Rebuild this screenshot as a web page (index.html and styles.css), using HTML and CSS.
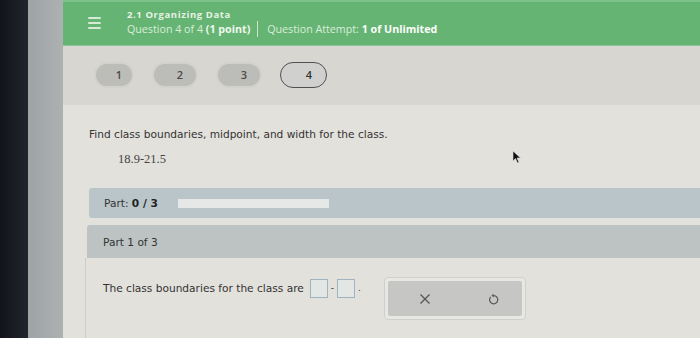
FILE: index.html
```html
<!DOCTYPE html>
<html>
<head>
<meta charset="utf-8">
<link rel="stylesheet" href="styles.css">
</head>
<body>
<div class="screen">
  <div class="bezel"></div>
  <div class="strip"></div>
  <div class="app">
    <header class="topbar">
      <div class="menu">
        <span></span><span></span><span></span>
      </div>
      <div class="titles">
        <div class="topic">2.1 Organizing Data</div>
        <div class="meta">Question 4 of 4 <b>(1 point)</b><span class="sep"></span>Question Attempt: <b class="hi">1 of Unlimited</b></div>
      </div>
    </header>
    <nav class="qnav">
      <div class="qbtn b1">1</div>
      <div class="qbtn">2</div>
      <div class="qbtn">3</div>
      <div class="qbtn cur">4</div>
    </nav>
    <main class="main">
      <p class="prompt">Find class boundaries, midpoint, and width for the class.</p>
      <p class="cls">18.9-21.5</p>
      <div class="partbar">
        <span>Part: <b>0 / 3</b></span>
        <div class="progress"></div>
      </div>
      <div class="parthead">Part 1 of 3</div>
      <div class="answer">
        <div class="sentence">The class boundaries for the class are <span class="box"></span><span class="dash">-</span><span class="box"></span><span class="dot">.</span></div>
        <div class="tools">
          <div class="toolsin">
            <svg class="xic" width="12" height="12" viewBox="0 0 12 12"><path d="M1.5 1.5 L10.5 10.5 M10.5 1.5 L1.5 10.5" stroke="#555" stroke-width="1.3" fill="none"/></svg>
            <svg class="undo" width="13" height="13" viewBox="0 0 14 14"><path d="M4 4.2 A4.4 4.4 0 1 0 7.2 2.8" stroke="#555" stroke-width="1.3" fill="none"/><path d="M7.2 0.8 L7.2 4.8 L4.8 2.8 Z" fill="#555"/></svg>
          </div>
        </div>
      </div>
    </main>
  </div>
  <svg class="cursor" width="10" height="14" viewBox="0 0 10 14"><path d="M1 1 L1 11 L3.5 8.6 L5.5 13 L7 12.3 L5 8 L8.5 8 Z" fill="#111" stroke="#ddd" stroke-width="0.6"/></svg>
</div>
</body>
</html>
```
FILE: styles.css
```css
* { box-sizing: border-box; }
html, body { margin: 0; padding: 0; }
body {
  width: 700px;
  height: 338px;
  overflow: hidden;
  background: #1b1e26;
  font-family: "DejaVu Sans", "Open Sans", sans-serif;
}
.screen {
  position: relative;
  display: flex;
  width: 700px;
  height: 338px;
}
.bezel {
  width: 28px;
  background: linear-gradient(90deg, #121419, #22252d);
}
.strip {
  width: 35px;
  background: linear-gradient(90deg, #9ea3a6, #adb1b2);
}
.app {
  flex: 1;
  display: flex;
  flex-direction: column;
  background: #e3e1dc;
}
.topbar {
  height: 46px;
  background: #66b474;
  border-top: 2px solid #7cc289;
  border-bottom: 1px solid #8dc798;
  display: flex;
  align-items: center;
  padding-left: 25px;
  color: #e4f1e2;
  font-family: "Open Sans", sans-serif;
}
.menu {
  width: 13px;
  display: flex;
  flex-direction: column;
  gap: 3px;
  margin-right: 26px;
  margin-top: -2px;
}
.menu span {
  display: block;
  height: 2px;
  background: #d6ebd5;
  border-radius: 1px;
}
.titles { margin-top: -2px; }
.topic {
  font-size: 9.5px;
  font-weight: 700;
  letter-spacing: 0.6px;
  line-height: 13px;
  color: #e6f2e4;
}
.meta {
  font-size: 10.7px;
  line-height: 15px;
  color: #d9eed8;
  display: flex;
  align-items: center;
  white-space: pre;
}
.meta b { font-weight: 700; color: #eef7ec; }
.meta b.hi { color: #fbfdfa; }
.sep {
  display: inline-block;
  width: 1px;
  height: 16px;
  background: #c9e6c9;
  margin: 0 9px 0 7px;
}
.qnav {
  height: 59px;
  background: #d8d6d1;
  display: flex;
  align-items: center;
  padding-left: 31px;
  gap: 18px;
  padding-bottom: 2px;
  font-family: "Open Sans", sans-serif;
}
.qbtn {
  width: 46px;
  height: 26px;
  border-radius: 13px;
  background: #bcbcb8;
  border: 2px solid #d3d1cc;
  font-size: 11px;
  color: #4a4a4a;
  display: flex;
  align-items: center;
  justify-content: flex-end;
  padding-right: 13px;
  font-weight: 600;
}
.qbtn.b1 { width: 40px; padding-right: 10px; }
.qbtn.cur {
  width: 47px;
  background: #d0d1cf;
  border: 1.5px solid #4f5050;
  padding-right: 14px;
  color: #333;
}
.main {
  flex: 1;
  display: flex;
  flex-direction: column;
  padding-left: 26px;
}
.prompt {
  margin: 22px 0 0 0;
  font-size: 10.6px;
  line-height: 14px;
  color: #333;
}
.cls {
  margin: 11px 0 0 29px;
  font-family: "Liberation Serif", serif;
  font-size: 12.5px;
  line-height: 14px;
  color: #444;
}
.partbar {
  margin-top: 22px;
  height: 30px;
  background: #b9c5c9;
  border-radius: 3px 0 0 3px;
  display: flex;
  align-items: center;
  padding-left: 15px;
  font-size: 10.6px;
  color: #333;
  gap: 20px;
}
.partbar b { font-weight: 700; color: #222; }
.progress {
  width: 151px;
  height: 9px;
  background: #e6e8e8;
}
.parthead {
  margin-top: 7px;
  margin-left: -2px;
  height: 33px;
  background: #bcc3c2;
  border-radius: 3px 0 0 0;
  display: flex;
  align-items: center;
  padding-left: 16px;
  font-size: 10.6px;
  color: #333;
}
.answer {
  flex: 1;
  margin-left: -4px;
  border-left: 1px solid #cfcdc8;
  display: flex;
  align-items: flex-start;
  padding: 19px 0 0 17px;
}
.sentence {
  display: flex;
  align-items: center;
  font-size: 10.6px;
  color: #333;
  margin-top: 1px;
  height: 20px;
}
.box {
  display: inline-block;
  width: 18px;
  height: 19px;
  border: 1.3px solid #9fb3c0;
  background: #e2e6e4;
  margin-left: 6px;
}
.dash { margin: 0 3px; font-size: 9px; }
.box + .dash + .box { margin-left: 0; }
.dot { margin-left: 3px; font-size: 9px; }
.tools {
  margin-left: 23px;
  width: 142px;
  height: 43px;
  border: 1.5px solid #cfcfcc;
  border-radius: 4px;
  background: #e7e7e4;
  padding: 3px;
}
.toolsin {
  height: 100%;
  background: #c6c7c5;
  border-radius: 2px;
  display: flex;
  align-items: center;
  padding-left: 31px;
  gap: 56px;
}
.undo { margin-top: 1px; }
.cursor {
  position: absolute;
  left: 512px;
  top: 150px;
}
```
